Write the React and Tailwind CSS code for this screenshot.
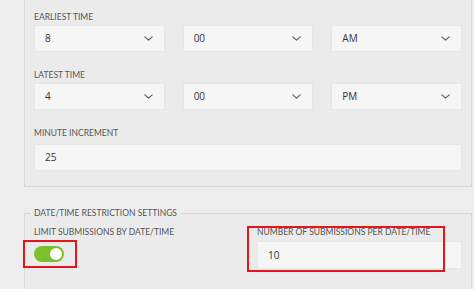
import React from 'react'

const Chevron = () => (
  <svg width="9" height="5" viewBox="0 0 9 5" fill="none" className="shrink-0">
    <path d="M0.8 0.8l3.7 3.4 3.7-3.4" stroke="#5a5a5a" strokeWidth="1.1" strokeLinecap="round" strokeLinejoin="round" />
  </svg>
)

const Select = ({ value }) => (
  <div className="h-[27px] bg-[#f6f6f6] border border-[#e6e6e6] flex items-center justify-between pl-[10px] pr-[11px] text-[10px] text-[#333]">
    <span>{value}</span>
    <Chevron />
  </div>
)

const Label = ({ children, className = '' }) => (
  <div className={`font-['Lato'] text-[8.5px] leading-[12px] uppercase text-[#555] ${className}`}>{children}</div>
)

const TimeRow = ({ label, values, className }) => (
  <div className={className}>
    <Label>{label}</Label>
    <div className="grid grid-cols-3 gap-[18px] mt-[2px]">
      {values.map((v, i) => <Select key={i} value={v} />)}
    </div>
  </div>
)

export default function App() {
  return (
    <div
      className="relative w-[474px] h-[292px] overflow-hidden bg-[#eeeeee]"
      style={{ fontFamily: '"Open Sans", "Noto Sans", sans-serif' }}
    >
      <div className="h-[289px] pl-[24px] pr-[2px] overflow-hidden">
        <div className="border-x border-b border-[#d8d8d8] bg-[#ebebeb] pl-[9px] pr-[9px] pt-[11px] pb-[15px]">
          <TimeRow label="Earliest Time" values={['8', '00', 'AM']} />
          <TimeRow label="Latest Time" values={['4', '00', 'PM']} className="mt-[17px]" />
          <div className="mt-[17px]">
            <Label>Minute Increment</Label>
            <div className="mt-[5px] h-[27px] bg-[#f6f6f6] border border-[#e6e6e6] flex items-center pl-[10px] text-[10px] text-[#333]">
              25
            </div>
          </div>
        </div>

        <fieldset className="mt-[20px] border border-[#d8d8d8] bg-[#ebebeb] pl-[9px] pr-[9px] pb-[30px] min-h-[120px]">
          <legend className="-ml-[4px] px-[4px] font-['Lato'] text-[8.5px] leading-[12px] uppercase text-[#555]">
            Date/Time Restriction Settings
          </legend>
          <div className="grid grid-cols-2 gap-[18px] mt-[7px]">
            <div>
              <Label>Limit Submissions by Date/Time</Label>
              <div className="mt-[8px] w-[30px] h-[16px] rounded-full bg-[#7cc12c] flex items-center justify-end pr-[2px]">
                <div className="w-[12px] h-[12px] rounded-full bg-white" />
              </div>
            </div>
            <div>
              <Label>Number of Submissions per Date/Time</Label>
              <div className="mt-[3px] h-[28px] bg-[#f6f6f6] border border-[#e6e6e6] flex items-center pl-[10px] text-[10px] text-[#333]">
                10
              </div>
            </div>
          </div>
        </fieldset>
      </div>

      <div className="absolute left-[23px] top-[240px] w-[54px] h-[28px] border-2 border-[#e8141b]" />
      <div className="absolute left-[247px] top-[226px] w-[198px] h-[46px] border-2 border-[#e8141b]" />
      <div className="h-[3px] bg-white" />
    </div>
  )
}
